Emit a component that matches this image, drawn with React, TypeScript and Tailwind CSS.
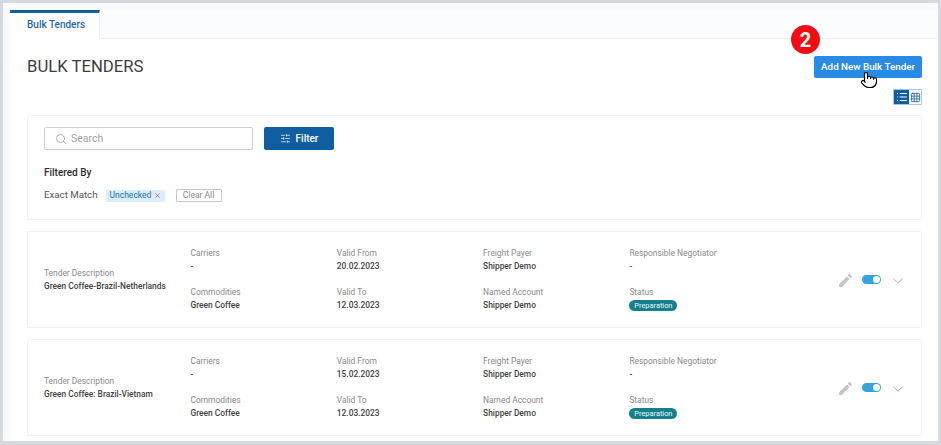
import { ChevronDown, Grid3x3, List, Pointer, Search, SlidersHorizontal, X } from "lucide-react";
import { MdEdit } from "react-icons/md";

const tenders = [
  { description: "Green Coffee-Brazil-Netherlands", validFrom: "20.02.2023" },
  { description: "Green Coffee: Brazil-Vietnam", validFrom: "15.02.2023" },
];

function Field({ label, value }: { label: string; value: string }) {
  return (
    <div className="flex flex-col h-[26px]">
      <span className="text-[8.4px] leading-[13px] text-[#8b8b8b]">{label}</span>
      <span className="text-[8.4px] leading-[13px] font-medium text-[#3f3f3f]">{value}</span>
    </div>
  );
}

function TenderCard({ description, validFrom }: { description: string; validFrom: string }) {
  return (
    <div className="flex items-center h-[97px] shrink-0 pl-[16px] bg-white border border-[#f1f2f3] rounded-[2px]">
      <div className="w-[146.5px] mt-[1px] shrink-0">
        <Field label="Tender Description" value={description} />
      </div>
      <div className="w-[146.3px] shrink-0 flex flex-col gap-[13px]">
        <Field label="Carriers" value="-" />
        <Field label="Commodities" value="Green Coffee" />
      </div>
      <div className="w-[146.3px] shrink-0 flex flex-col gap-[13px]">
        <Field label="Valid From" value={validFrom} />
        <Field label="Valid To" value="12.03.2023" />
      </div>
      <div className="w-[146.3px] shrink-0 flex flex-col gap-[13px]">
        <Field label="Freight Payer" value="Shipper Demo" />
        <Field label="Named Account" value="Shipper Demo" />
      </div>
      <div className="w-[208px] shrink-0 flex flex-col gap-[13px]">
        <Field label="Responsible Negotiator" value="-" />
        <div className="flex flex-col h-[26px]">
          <span className="text-[8.4px] leading-[13px] text-[#8b8b8b]">Status</span>
          <span className="mt-[1px] self-start h-[11px] w-[48px] flex items-center justify-center rounded-full bg-[#167f8e] text-[7.4px] leading-none text-[#e8f6f7]">
            Preparation
          </span>
        </div>
      </div>
      <div className="flex items-center mt-[2px]">
        <MdEdit className="text-[#c4c4c4]" size={17} />
        <div className="ml-[8px] mb-[2px] flex items-center justify-end w-[19px] h-[9px] rounded-full bg-[#35a4dc] pr-[1px]">
          <span className="w-[7px] h-[7px] rounded-full bg-white" />
        </div>
        <ChevronDown className="ml-[8px] text-[#a8a8a8]" size={18} strokeWidth={1.25} />
      </div>
    </div>
  );
}

export default function App() {
  return (
    <div className="relative w-[941px] h-[445px] overflow-hidden bg-[#f9fafb] border-t-[3px] border-l-[3px] border-r-[3px] border-b-[4px] border-[#d6d9df] font-['Roboto',sans-serif]">
      <div className="ml-[7px] mt-[7px] h-full bg-white flex flex-col">
        {/* Tab strip */}
        <div className="flex h-[29px] shrink-0 bg-[#fbfcfd] border-b border-[#f0f1f3]">
          <div className="w-[90px] h-[29px] bg-white border-t-[3px] border-r border-t-[#0f5e9f] border-r-[#eef0f2] pl-[17px] text-[10px] leading-[24px] font-medium text-[#1f69ab]">
            Bulk Tenders
          </div>
        </div>

        <div className="flex flex-col pl-[17px] pr-[16px]">
          {/* Header */}
          <div className="flex justify-between h-[76px] shrink-0">
            <h1 className="mt-[18px] text-[16.7px] leading-[20px] font-normal text-[#3d3d3d]">BULK TENDERS</h1>
            <div className="flex flex-col items-end pt-[17px]">
              <button className="w-[108px] h-[22px] rounded-[2px] bg-[#2a8be6] text-[9.8px] font-medium text-white">
                Add New Bulk Tender
              </button>
              <div className="flex mt-[11px] h-[16px] w-[29px] border border-[#a9c8e3]">
                <span className="flex items-center justify-center w-[15px] bg-[#0f5e9f]">
                  <List size={12} className="text-white" strokeWidth={2} />
                </span>
                <span className="flex items-center justify-center flex-1 bg-white">
                  <Grid3x3 size={11} className="text-[#2a6ea8]" strokeWidth={2} />
                </span>
              </div>
            </div>
          </div>

          {/* Filter panel */}
          <div className="h-[105px] shrink-0 border border-[#f1f2f3] rounded-[2px] px-[16px] pt-[11px]">
            <div className="flex gap-[11px]">
              <div className="flex items-center w-[209px] h-[23px] border border-[#cfcfcf] rounded-[2px] pl-[10px]">
                <Search size={12} className="text-[#9a9a9a]" strokeWidth={1.5} />
                <span className="ml-[4px] text-[10.5px] text-[#a3a3a3]">Search</span>
              </div>
              <button className="flex items-center justify-center gap-[5px] w-[70px] h-[23px] rounded-[2px] bg-[#0f5e9f] text-[10px] font-medium text-white">
                <SlidersHorizontal size={11} strokeWidth={1.5} />
                Filter
              </button>
            </div>
            <div className="mt-[16px] text-[10px] leading-[13px] font-medium text-[#2f2f2f]">Filtered By</div>
            <div className="flex items-center mt-[10px] h-[13px]">
              <span className="text-[9.7px] text-[#555555]">Exact Match</span>
              <span className="ml-[8px] flex items-center pl-[4px] gap-[3px] w-[59px] h-[12px] bg-[#d9edfb] rounded-[1px] text-[8.5px] text-[#2471b3]">
                Unchecked
                <X size={7} strokeWidth={2.5} className="text-[#d8404a]" />
              </span>
              <span className="ml-[11px] flex items-center justify-center w-[46px] h-[13px] border border-[#c8c8c8] rounded-[1px] text-[8.5px] text-[#8c8c8c]">
                Clear All
              </span>
            </div>
          </div>

          {/* Tender list */}
          <div className="flex flex-col gap-[11px] mt-[11px]">
            {tenders.map((t) => (
              <TenderCard key={t.description} description={t.description} validFrom={t.validFrom} />
            ))}
          </div>
        </div>
      </div>

      {/* Tutorial marker and cursor */}
      <div className="absolute left-[788px] top-[22px] w-[29px] h-[29px] rounded-full bg-[#f20d14] flex items-center justify-center text-[20px] font-bold text-white">
        2
      </div>
      <Pointer className="absolute left-[857px] top-[68px] text-black" fill="white" size={18} strokeWidth={1.5} />
    </div>
  );
}
